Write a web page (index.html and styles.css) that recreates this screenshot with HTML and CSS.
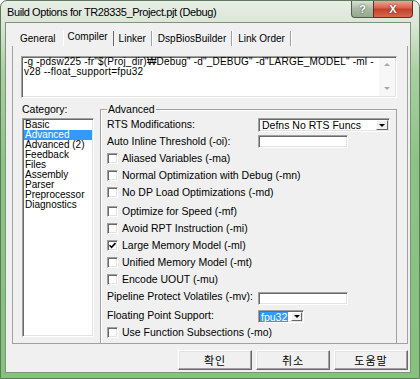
FILE: index.html
```html
<!DOCTYPE html>
<html lang="ko">
<head>
    <meta charset="UTF-8">
    <title>Build Options for TR28335_Project.pjt (Debug)</title>
    <link rel="stylesheet" href="styles.css">
</head>
<body>
    <div class="window">
        <div class="titlebar">
            <span class="title">Build Options for TR28335_Project.pjt (Debug)</span>
            <div class="caption-buttons">
                <div class="cap-help">?</div>
                <div class="cap-close">X</div>
            </div>
        </div>

        <div class="client">
            <!-- Tabs -->
            <div class="tabs">
                <div class="tab nosep">General</div>
                <div class="tab active">Compiler</div>
                <div class="tab">Linker</div>
                <div class="tab">DspBiosBuilder</div>
                <div class="tab">Link Order</div>
            </div>

            <div class="page">
                <!-- Befehlszeile -->
                <div class="cmdline sunken">
                    <div class="cmd-text">-g -pdsw225 -fr"$(Proj_dir)₩Debug" -d"_DEBUG" -d"LARGE_MODEL" -ml -<br>v28 --float_support=fpu32</div>
                    <div class="vscroll">
                        <span class="arrow-up"></span>
                        <span class="arrow-down"></span>
                    </div>
                </div>

                <div class="lower">
                    <div class="category">
                        <div class="cat-label">Category:</div>
                        <ul class="listbox sunken">
                            <li>Basic</li>
                            <li class="selected">Advanced</li>
                            <li>Advanced (2)</li>
                            <li>Feedback</li>
                            <li>Files</li>
                            <li>Assembly</li>
                            <li>Parser</li>
                            <li>Preprocessor</li>
                            <li>Diagnostics</li>
                        </ul>
                    </div>

                    <fieldset class="group">
                        <legend>Advanced</legend>
                        <div class="row">
                            <span class="label">RTS Modifications:</span>
                            <div class="combo sunken combo-wide">
                                <span class="combo-text">Defns No RTS Funcs</span>
                                <span class="drop"></span>
                            </div>
                        </div>
                        <div class="row">
                            <span class="label">Auto Inline Threshold (-oi):</span>
                            <div class="field sunken"></div>
                        </div>
                        <div class="row"><span class="check sunken"></span>Aliased Variables (-ma)</div>
                        <div class="row"><span class="check sunken"></span>Normal Optimization with Debug (-mn)</div>
                        <div class="row"><span class="check sunken"></span>No DP Load Optimizations (-md)</div>
                        <div class="row gap"><span class="check sunken"></span>Optimize for Speed (-mf)</div>
                        <div class="row"><span class="check sunken"></span>Avoid RPT Instruction (-mi)</div>
                        <div class="row">
                            <span class="check sunken">
                                <svg width="7" height="7" viewBox="0 0 7 7"><path d="M0.5 3.2 L2.6 5.4 L6.5 1" fill="none" stroke="#000" stroke-width="1.6"/></svg>
                            </span>Large Memory Model (-ml)
                        </div>
                        <div class="row"><span class="check sunken"></span>Unified Memory Model (-mt)</div>
                        <div class="row"><span class="check sunken"></span>Encode UOUT (-mu)</div>
                        <div class="row">
                            <span class="label">Pipeline Protect Volatiles (-mv):</span>
                            <div class="field field-low sunken"></div>
                        </div>
                        <div class="row gap">
                            <span class="label">Floating Point Support:</span>
                            <div class="combo sunken combo-small">
                                <span class="combo-text"><span class="hl">fpu32</span></span>
                                <span class="drop"></span>
                            </div>
                        </div>
                        <div class="row"><span class="check sunken"></span>Use Function Subsections (-mo)</div>
                    </fieldset>
                </div>
            </div>

            <div class="buttons">
                <div class="btn">확인</div>
                <div class="btn">취소</div>
                <div class="btn">도움말</div>
            </div>
        </div>
    </div>
</body>
</html>
```

FILE: styles.css
```css
* {
    box-sizing: border-box;
}

body {
    margin: 0;
    background: #fff;
    font-family: "Liberation Sans", Arial, sans-serif;
    font-size: 10.5px;
    color: #000;
}

/* Fensterrahmen */
.window {
    width: 420px;
    height: 379px;
    border: 1px solid #5f7a5b;
    border-radius: 7px 7px 0 0;
    background: linear-gradient(to bottom, #e8eee6 0, #dce6d8 22px, #a9d0a1 70px, #8cc485 160px, #86c17e 100%);
    padding: 0 8px 0 4px;
    display: flex;
    flex-direction: column;
    overflow: hidden;
}

.titlebar {
    height: 21px;
    flex: none;
    display: flex;
    justify-content: space-between;
    padding-left: 2px;
}

.title {
    align-self: center;
    font-size: 11px;
    letter-spacing: -0.4px;
    margin-top: 1px;
}

.caption-buttons {
    display: flex;
    align-self: flex-start;
    margin-top: -1px;
    margin-right: -2px;
    height: 18px;
}

.cap-help,
.cap-close {
    height: 18px;
    display: flex;
    align-items: center;
    justify-content: center;
    color: #fff;
    font-weight: bold;
    font-size: 11px;
    text-shadow: 0 0 2px #333;
    border: 1px solid #4f5f4c;
    border-top: none;
}

.cap-help {
    width: 22px;
    background: linear-gradient(to bottom, #dde6da, #a9bba5 50%, #93a98f);
    border-radius: 0 0 0 4px;
    border-right: none;
}

.cap-close {
    width: 40px;
    background: linear-gradient(to bottom, #eab1a4, #d8644e 45%, #c2412a 55%, #d46a4f);
    border-color: #6a2b20;
    border-radius: 0 0 4px 0;
}

.client {
    height: 351px;
    flex: none;
    border: 1px solid #7d947a;
    background: #f0f0f0;
    display: flex;
    flex-direction: column;
}

/* Reiter */
.tabs {
    display: flex;
    padding: 8px 0 0 9px;
    height: 23px;
    flex: none;
    font-size: 10px;
}

.tab {
    height: 15px;
    line-height: 15px;
    padding: 0 5px;
    border-right: 1px solid #a0a0a0;
    box-shadow: 1px 0 0 #fff;
    margin-right: 1px;
}

.tab.nosep {
    border-right: none;
    box-shadow: none;
    padding-right: 7px;
    margin-right: 0;
}

.tab.active {
    border-left: 1px solid #fff;
    border-right: 1px solid #696969;
    box-shadow: none;
    padding-left: 4px;
    line-height: 11px;
    margin-right: 0;
}

.page {
    height: 298px;
    flex: none;
    margin: 0 2px 0 6px;
    border: 1px solid #a0a0a0;
    border-top: none;
    padding: 10px 0 0 8px;
    overflow: hidden;
}

/* eingesenkte Felder */
.sunken {
    background: #fff;
    border: 1px solid;
    border-color: #a0a0a0 #fff #fff #a0a0a0;
    box-shadow: inset 1px 1px 0 #696969, inset -1px -1px 0 #e3e3e3;
}

.cmdline {
    width: 376px;
    height: 42px;
    display: flex;
    padding: 1px;
}

.cmd-text {
    flex: 1;
    font-size: 10px;
    letter-spacing: 0.2px;
    line-height: 10px;
    padding-left: 1px;
    margin-top: -1px;
    white-space: nowrap;
    overflow: hidden;
}

.vscroll {
    width: 16px;
    background: #f7f7f7;
    display: flex;
    flex-direction: column;
    justify-content: space-between;
    align-items: center;
    padding: 5px 0 6px;
}

.arrow-up,
.arrow-down {
    width: 0;
    height: 0;
    border-left: 3px solid transparent;
    border-right: 3px solid transparent;
}

.arrow-up {
    border-bottom: 3px solid #a8a8a8;
}

.arrow-down {
    border-top: 3px solid #a8a8a8;
}

.lower {
    display: flex;
    margin-top: 5px;
}

.category {
    width: 72px;
    margin-left: 1px;
}

.cat-label {
    line-height: 12px;
}

.listbox {
    list-style: none;
    margin: 3px 0 0;
    padding: 1px;
    height: 219px;
    font-size: 10px;
}

.listbox li {
    line-height: 10px;
    padding-left: 1px;
    white-space: nowrap;
}

.listbox li.selected {
    background: #3399ff;
    color: #fff;
}

/* Gruppenrahmen */
.group {
    margin: 0 0 0 6px;
    width: 297px;
    height: 262px;
    padding: 1px 0 0 6px;
    border: 1px solid #a0a0a0;
    box-shadow: inset 1px 1px 0 #fff;
    min-width: 0;
}

.group legend {
    padding: 0 1px;
    line-height: 12px;
    background: #f0f0f0;
}

.row {
    display: flex;
    align-items: flex-start;
    height: 17px;
    line-height: 17px;
    white-space: nowrap;
}

.row.gap {
    margin-top: 2px;
}

.label {
    width: 151px;
    flex: none;
}

.check {
    width: 11px;
    height: 11px;
    flex: none;
    margin: 3px 4px 0 0;
    display: flex;
    align-items: center;
    justify-content: center;
}

.field {
    width: 90px;
    height: 13px;
    margin-top: 2px;
}

.field-low {
    margin-top: 4px;
}

.combo {
    display: flex;
    padding: 1px;
    margin-top: 2px;
    line-height: 10px;
}

.combo-wide {
    width: 132px;
    height: 14px;
}

.combo-small {
    width: 46px;
    height: 13px;
    margin-top: 3px;
}

.combo-text {
    flex: 1;
    padding-left: 2px;
    white-space: nowrap;
}

.combo-small .combo-text {
    padding-left: 0;
}

.hl {
    display: inline-block;
    background: #3399ff;
    color: #fff;
    padding: 0 1px;
}

.drop {
    width: 12px;
    flex: none;
    background: #f0f0f0;
    border: 1px solid;
    border-color: #fff #696969 #696969 #fff;
    display: flex;
    align-items: center;
    justify-content: center;
}

.combo-small .drop {
    width: 11px;
}

.drop::after {
    content: "";
    border-left: 3px solid transparent;
    border-right: 3px solid transparent;
    border-top: 3px solid #000;
}

/* Knöpfe unten */
.buttons {
    display: flex;
    justify-content: flex-end;
    gap: 4px;
    padding-right: 2px;
    margin-top: 6px;
}

.btn {
    width: 74px;
    height: 20px;
    display: flex;
    align-items: center;
    justify-content: center;
    font-family: "Noto Sans CJK KR", sans-serif;
    font-size: 11px;
    letter-spacing: 1px;
    border: 1px solid;
    border-color: #fff #696969 #696969 #fff;
    box-shadow: inset -1px -1px 0 #a0a0a0, inset 1px 1px 0 #e3e3e3;
}
```
